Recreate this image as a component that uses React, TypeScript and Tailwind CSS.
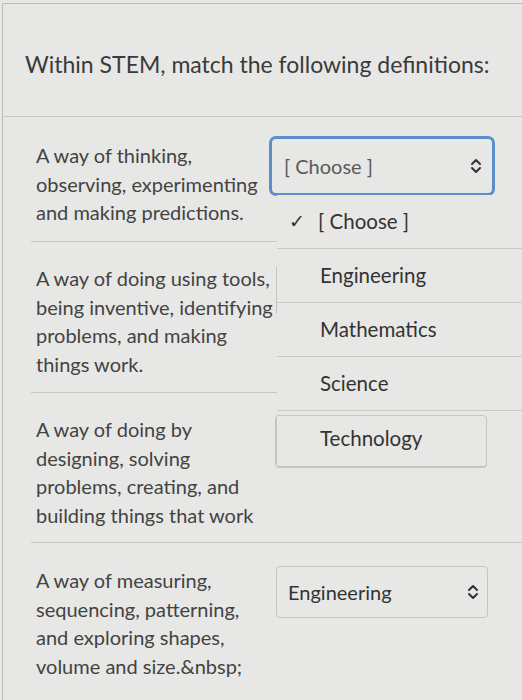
import React from "react";

const font = { fontFamily: "Lato, 'Open Sans', sans-serif" };

function UpDown() {
  return (
    <svg width="12" height="16" viewBox="0 0 12 16" fill="none" stroke="#333" strokeWidth="2" strokeLinecap="round" strokeLinejoin="round">
      <path d="M2 6 L6 2 L10 6" />
      <path d="M2 10 L6 14 L10 10" />
    </svg>
  );
}

function Lines({ lines }: { lines: string[] }) {
  return (
    <div className="w-[245px] shrink-0 pl-[5px] text-[20px] leading-[28.5px] text-[#434343]">
      {lines.map((l, i) => (
        <div key={i} className="whitespace-nowrap">{l}</div>
      ))}
    </div>
  );
}

function Select({ value }: { value?: string }) {
  return (
    <div className="flex h-[52px] w-[212px] items-center justify-between rounded-[4px] border border-[#c4c4c2] pl-[11px] pr-[4px] text-[20px] text-[#333]">
      {value ? (
        <>
          <span>{value}</span>
          <span className="flex w-[20px] justify-center"><UpDown /></span>
        </>
      ) : null}
    </div>
  );
}

export default function App() {
  const items = ["[ Choose ]", "Engineering", "Mathematics", "Science", "Technology"];
  return (
    <div className="relative h-[700px] w-[522px] overflow-hidden bg-[#e7e7e5]" style={font}>
      <div className="ml-[2px] mt-[3px] h-[697px] border-l border-t border-[#bcbcba]">
        <div className="flex h-[113px] items-center border-b border-[#c6c6c4] pl-[22px] pt-[9px]">
          <h1 className="text-[23px] text-[#3a3a3a]">Within STEM, match the following definitions:</h1>
        </div>
        <div className="ml-[28px]">
          <div className="flex h-[125px] border-b border-[#c6c6c4] pt-[19px]">
            <div className="pt-[5px]">
              <Lines lines={["A way of thinking,", "observing, experimenting", "and making predictions."]} />
            </div>
            <div className="h-[60px] w-[226px] -translate-x-[7px]">
              <div className="flex h-[60px] w-[226px] items-center justify-between rounded-[7px] border-[3px] border-[#5b8ecb] pl-[12px] pr-[10px] text-[20px] text-[#5a5a5a]">
                <span>[ Choose ]</span>
                <UpDown />
              </div>
            </div>
          </div>
          <div className="flex h-[151px] border-b border-[#c6c6c4] pt-[22px]">
            <Lines lines={["A way of doing using tools,", "being inventive, identifying", "problems, and making", "things work."]} />
            <Select />
          </div>
          <div className="flex h-[150px] border-b border-[#c6c6c4] pt-[22px]">
            <Lines lines={["A way of doing by", "designing, solving", "problems, creating, and", "building things that work"]} />
            <Select />
          </div>
          <div className="flex h-[160px] pt-[23px]">
            <Lines lines={["A way of measuring,", "sequencing, patterning,", "and exploring shapes,", "volume and size.&nbsp;"]} />
            <Select value="Engineering" />
          </div>
        </div>
      </div>

      <div className="absolute left-[277px] top-[195px] w-[245px] bg-[#e7e7e5] text-[20.5px] text-[#333]">
        {items.map((it, i) => (
          <div
            key={it}
            className={
              "relative flex h-[54px] items-center " +
              (i < 4 ? "border-b border-[#c9c9c7]" : "")
            }
          >
            {i === 4 && (
              <div className="absolute left-[-2px] top-[4px] h-[53px] w-[212px] rounded-[4px] border border-[#c4c4c2]" />
            )}
            {i === 0 ? (
              <>
                <span className="ml-[12px] w-[29px] text-[19px]">✓</span>
                <span>{it}</span>
              </>
            ) : (
              <span className="relative ml-[43px]">{it}</span>
            )}
          </div>
        ))}
      </div>
    </div>
  );
}
